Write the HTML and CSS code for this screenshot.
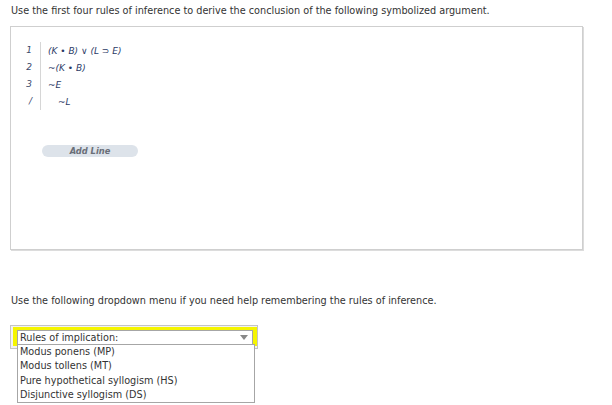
FILE: index.html
```html
<!DOCTYPE html>
<html>
<head>
<meta charset="utf-8">
<link rel="stylesheet" href="styles.css">
</head>
<body>
<p class="prompt">Use the first four rules of inference to derive the conclusion of the following symbolized argument.</p>
<div class="proof-box">
  <div class="proof">
    <div class="row"><span class="num">1</span><span class="formula">(K • B) ∨ (L ⊃ E)</span></div>
    <div class="row"><span class="num">2</span><span class="formula">~(K • B)</span></div>
    <div class="row"><span class="num">3</span><span class="formula">~E</span></div>
    <div class="row"><span class="num">/</span><span class="formula concl">~L</span></div>
  </div>
  <div class="add-line">Add Line</div>
</div>
<p class="prompt second">Use the following dropdown menu if you need help remembering the rules of inference.</p>
<div class="dd-wrap">
  <div class="dd-outer">
    <div class="dd-focus">
      <div class="dd-select"><span>Rules of implication:</span><span class="arrow"></span></div>
    </div>
  </div>
  <ul class="dd-list">
    <li>Modus ponens (MP)</li>
    <li>Modus tollens (MT)</li>
    <li>Pure hypothetical syllogism (HS)</li>
    <li>Disjunctive syllogism (DS)</li>
  </ul>
</div>
</body>
</html>
```
FILE: styles.css
```css
html, body {
  margin: 0;
  padding: 0;
  background: #fff;
  min-height: 405px;
}
body {
  font-family: "DejaVu Sans", Verdana, sans-serif;
  font-size: 9.7px;
  color: #333;
}
.prompt {
  margin: 0;
  padding: 5px 0 0 11px;
  line-height: 11px;
  font-size: 9.7px;
}
.proof-box {
  margin: 10px 0 0 10px;
  width: 571px;
  height: 222px;
  border: 1px solid #cfcfcf;
  box-shadow: 1px 1px 0 #dcdcdc;
}
.proof {
  display: flex;
  flex-direction: column;
  padding-top: 15px;
}
.row {
  display: flex;
  height: 17px;
  align-items: center;
}
.num {
  width: 21px;
  text-align: right;
  padding-right: 8px;
  font-style: italic;
  color: #3a4a6b;
  font-size: 9px;
  height: 17px;
  line-height: 17px;
  border-right: 1px solid #d6d6d6;
}
.formula {
  padding-left: 7px;
  color: #2c3b66;
  font-size: 9px;
  font-style: italic;
}
.formula.concl {
  padding-left: 17px;
}
.add-line {
  margin: 35px 0 0 31px;
  width: 96px;
  height: 12px;
  border-radius: 6px;
  background: #dde3ea;
  color: #6a6f78;
  font-style: italic;
  font-weight: bold;
  font-size: 8.3px;
  line-height: 12px;
  text-align: center;
}
.prompt.second {
  padding-top: 45px;
}
.dd-wrap {
  position: relative;
  margin: 19px 0 0 10px;
  width: 248px;
}
.dd-outer {
  width: 246px;
  height: 22px;
  border: 1px solid #c4c4c4;
  background: #f2f2f2;
}
.dd-focus {
  margin: 1px 0 0 2px;
  width: 240px;
  height: 15px;
  border: 2px solid #f5f500;
  background: #f5f500;
}
.dd-select {
  margin: 1px 0 0 2px;
  width: 236px;
  height: 14px;
  border: 1px solid #a6a6a6;
  border-bottom: none;
  background: #fff;
  display: flex;
  justify-content: space-between;
  align-items: center;
  padding-left: 2px;
  box-sizing: border-box;
  line-height: 13px;
  color: #333;
}
.arrow {
  width: 0;
  height: 0;
  border-left: 4px solid transparent;
  border-right: 4px solid transparent;
  border-top: 5px solid #888;
  margin-right: 4px;
}
.dd-list {
  position: absolute;
  left: 7px;
  top: 19px;
  width: 238px;
  margin: 0;
  padding: 0 0 0 2px;
  box-sizing: border-box;
  list-style: none;
  border: 1px solid #a6a6a6;
  background: #fff;
  height: 59px;
}
.dd-list li {
  height: 14.3px;
  line-height: 14.3px;
  color: #333;
}
```
